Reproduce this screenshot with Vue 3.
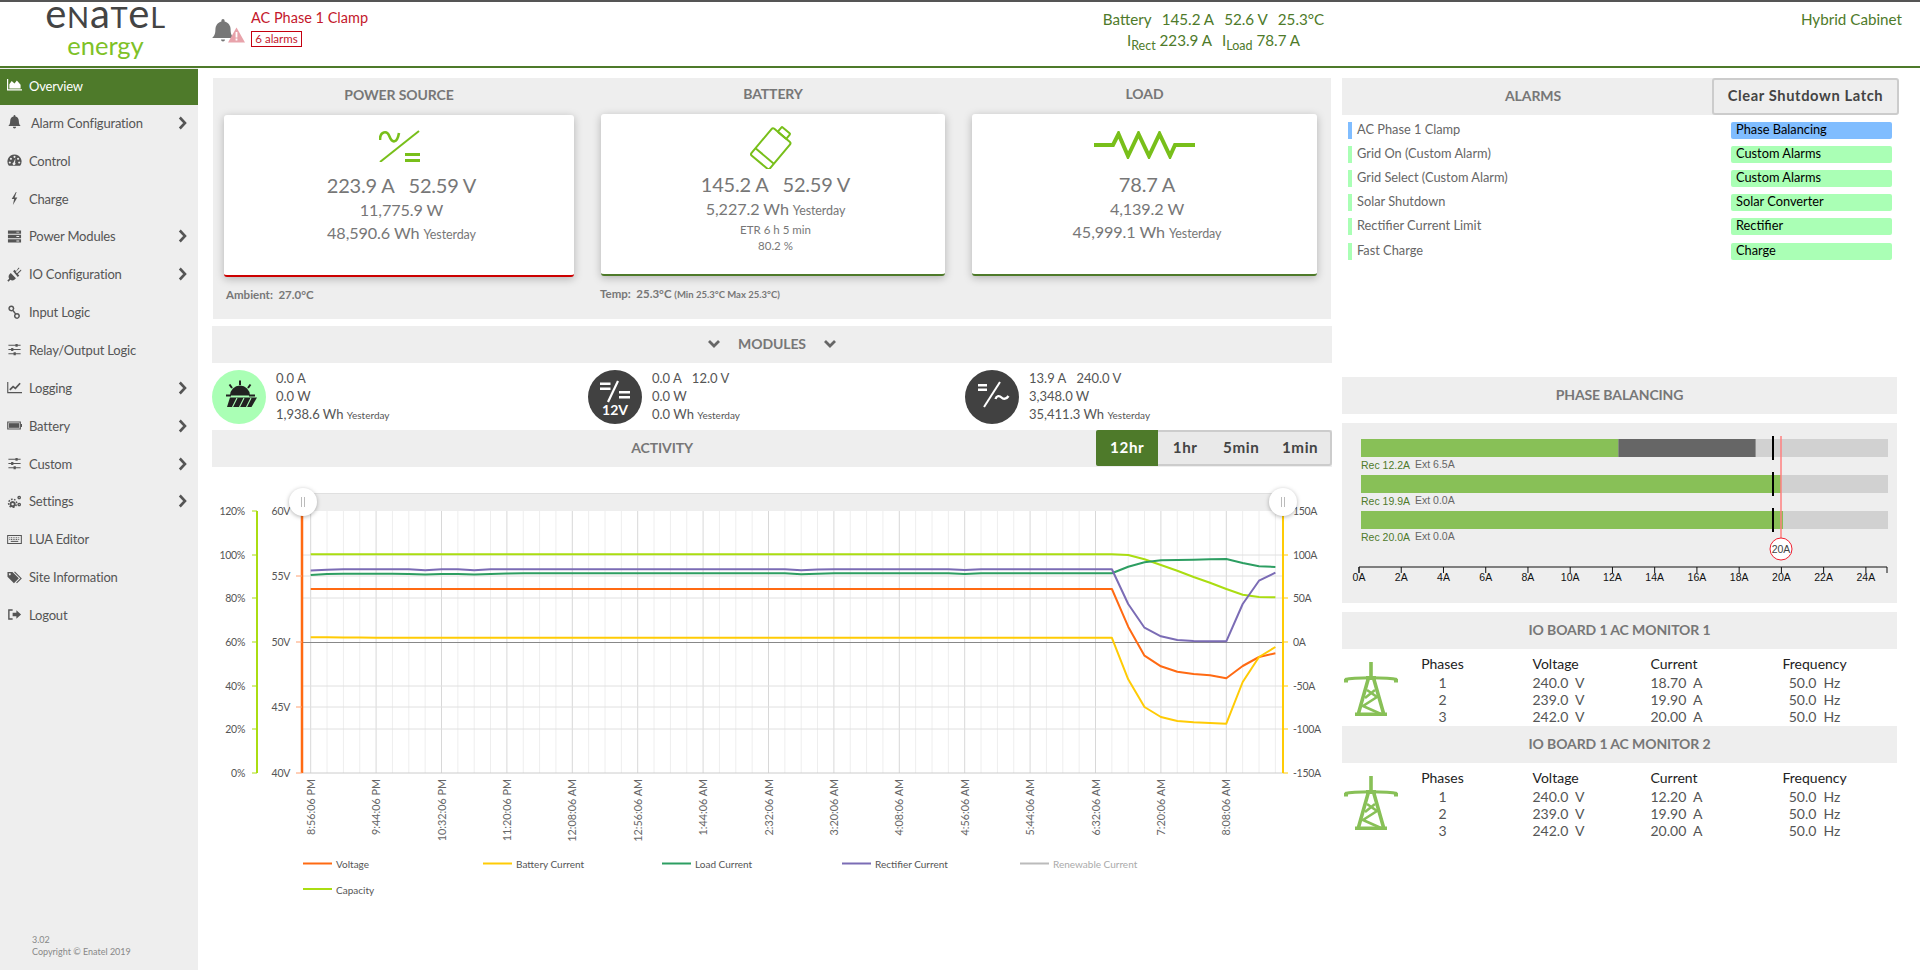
<script setup>
const menu = [
  { t: 'Overview', active: true, p: [{ f: 'M0 0h1.3v11H16v1.2H0z M2.5 10V5.5L5 2.2 8 4.7 10.5 1.5 14.5 6V10z' }] },
  { t: 'Alarm Configuration', more: true, wide: true, p: [{ f: 'M8 0a1 1 0 0 1 1 1v.5c2.4.5 3.6 2.5 3.6 4.8 0 3 .9 4.3 2 5.4H1.4c1.1-1.1 2-2.4 2-5.4C3.4 4 4.6 2 7 1.5V1a1 1 0 0 1 1-1z M6.3 12.6h3.4a1.7 1.7 0 0 1-3.4 0z' }] },
  { t: 'Control', p: [{ f: 'M8 1.5a7.5 7.5 0 0 0-6 12h12a7.5 7.5 0 0 0-6-12z M8 3a1.1 1.1 0 1 0 .01 0z M4.2 5a1.1 1.1 0 1 0 .01 0z M11.8 5a1.1 1.1 0 1 0 .01 0z M3 9a1.1 1.1 0 1 0 .01 0z M13 9a1.1 1.1 0 1 0 .01 0z M9 5.5 7 10a1.5 1.5 0 1 0 1.6.4z', e: 1 }] },
  { t: 'Charge', p: [{ f: 'M9.5 1 5 8.6h2.6L6.3 15 11 6.8H8.2L10.2 1z' }] },
  { t: 'Power Modules', more: true, p: [{ f: 'M1 1.5h14v3.6H1z M1 6.2h14v3.6H1z M1 10.9h14v3.6H1z M10 2.8h3v1h-3z M10 7.5h3v1h-3z M10 12.2h3v1h-3z', e: 1 }] },
  { t: 'IO Configuration', more: true, p: [{ f: 'M4 6.5l5.5 5.5-1.3 1.3c-1.4 1.2-3.2 1.3-4.6.4L1.6 15.7.3 14.4l2-2c-.9-1.4-.8-3.2.4-4.6z M6.5 4.6l1.6-1.6 1.6 1.6L12.2.9c.5-.5 1.3.3.8.8L9.3 5.3l1.4 1.4 3.6-3.6c.5-.5 1.3.3.8.8l-3.6 3.6 1.6 1.6-1.6 1.6z' }] },
  { t: 'Input Logic', p: [{ s: 'M6.5 2.2a2.4 2.4 0 1 0-3 3.6 2.4 2.4 0 0 0 3-3.6z M12.5 10.2a2.4 2.4 0 1 0-3 3.6 2.4 2.4 0 0 0 3-3.6z M6.5 6 9.5 10', w: 1.6 }] },
  { t: 'Relay/Output Logic', p: [{ s: 'M1.5 3.5h13 M1.5 8h13 M1.5 12.5h13', w: 1.2 }, { f: 'M9 2h2.4v3H9z M4.4 6.5h2.4v3H4.4z M7 11h2.4v3H7z' }] },
  { t: 'Logging', more: true, p: [{ s: 'M.8 2v11.5H16', w: 1.2 }, { s: 'M3 10.5 6.5 7l2.5 2 5-5.5', w: 1.8 }] },
  { t: 'Battery', more: true, p: [{ s: 'M.8 4.3h13.4v7.4H.8z M15.5 6.5v3', w: 1.2 }, { f: 'M2 5.5h11v5H2z' }] },
  { t: 'Custom', more: true, p: [{ s: 'M1.5 3.5h13 M1.5 8h13 M1.5 12.5h13', w: 1.2 }, { f: 'M9 2h2.4v3H9z M4.4 6.5h2.4v3H4.4z M7 11h2.4v3H7z' }] },
  { t: 'Settings', more: true, p: [{ s: 'M6 8.5a2.3 2.3 0 1 0 .01 0z', w: 2 }, { s: 'M6 5.5a4.3 4.3 0 1 0 .01 0z', w: 1.6, d: '1.8 1.5' }, { s: 'M13 2.5a1.2 1.2 0 1 0 .01 0z M13 10a1.2 1.2 0 1 0 .01 0z', w: 1.5 }] },
  { t: 'LUA Editor', p: [{ s: 'M.7 3.7h14.6v8.6H.7z', w: 1.1 }, { s: 'M2.5 6.2h11 M2.5 8h11', w: 1.1, d: '1 .8' }, { s: 'M4 10h8', w: 1.1 }] },
  { t: 'Site Information', p: [{ f: 'M.5 2h5.3l6.8 6.8-5.2 5.2L.5 7.3z M3 3.5a1 1 0 1 0 .01 0z', e: 1 }, { s: 'M8 2l7 7-4.8 4.8', w: 1.2 }] },
  { t: 'Logout', p: [{ s: 'M6 3.2H2v9.6h4', w: 1.5 }, { f: 'M6 6.2h4V3.5L15 8l-5 4.5V9.8H6z' }] }
]
const alarms = [
  ['AC Phase 1 Clamp', 'Phase Balancing', 'blue'],
  ['Grid On (Custom Alarm)', 'Custom Alarms', ''],
  ['Grid Select (Custom Alarm)', 'Custom Alarms', ''],
  ['Solar Shutdown', 'Solar Converter', ''],
  ['Rectifier Current Limit', 'Rectifier', ''],
  ['Fast Charge', 'Charge', '']
]
const monitors = [
  { title: 'IO BOARD 1 AC MONITOR 1', rows: [[1, '240.0', '18.70'], [2, '239.0', '19.90'], [3, '242.0', '20.00']] },
  { title: 'IO BOARD 1 AC MONITOR 2', rows: [[1, '240.0', '12.20'], [2, '239.0', '19.90'], [3, '242.0', '20.00']] }
]

// chart geometry in page pixels
const X0 = 310.7, DX = 16.35
const hLight = [555, 576, 598, 686, 707, 729]
const vLines = Array.from({ length: 60 }, (_, i) => ({ x: X0 + i * DX, major: i % 4 === 0 }))
const times = ['8:56:06 PM', '9:44:06 PM', '10:32:06 PM', '11:20:06 PM', '12:08:06 AM', '12:56:06 AM', '1:44:06 AM', '2:32:06 AM', '3:20:06 AM', '4:08:06 AM', '4:56:06 AM', '5:44:06 AM', '6:32:06 AM', '7:20:06 AM', '8:08:06 AM']
const pct = ['120%', '100%', '80%', '60%', '40%', '20%', '0%'].map((t, i) => ({ t, y: [511, 555, 598, 642, 686, 729, 773][i] }))
const amp = ['150A', '100A', '50A', '0A', '-50A', '-100A', '-150A'].map((t, i) => ({ t, y: [511, 555, 598, 642, 686, 729, 773][i] }))
const volt = [['60V', 511], ['55V', 576], ['50V', 642], ['45V', 707], ['40V', 773]].map(([t, y]) => ({ t, y }))

function series(base, wiggle, tail) {
  const pts = []
  for (let i = 0; i < 50; i++) {
    const o = wiggle[i] ?? 0
    pts.push(`${(X0 + i * DX).toFixed(1)},${(base + o).toFixed(1)}`)
  }
  tail.forEach((y, i) => pts.push(`${(X0 + (50 + i) * DX).toFixed(1)},${(480 + y / 3).toFixed(1)}`))
  return pts.join(' ')
}
const lines = [
  { c: '#aadd11', p: series(554.2, {}, [225, 238, 255, 272, 291, 308, 327, 344, 351, 352]) },
  { c: '#2d9e62', p: series(573.2, { 0: 1.8, 1: .8, 2: .5, 3: .5, 4: .5, 5: .5, 6: .7, 7: 1.2, 8: .7, 9: .7, 10: 1.2, 11: .8, 12: .4, 24: .1, 30: 1.1, 31: .6, 40: .9 }, [260, 247, 241, 240, 239, 238, 237, 249, 259, 261]) },
  { c: '#7b6cb5', p: series(569.3, { 0: 1.2, 1: .5, 7: 1, 10: 1, 30: .9, 31: .2, 40: .8 }, [372, 443, 469, 480, 483, 484, 484, 372, 302, 278]) },
  { c: '#ff6a13', p: series(589, {}, [440, 527, 559, 575, 582, 586, 595, 558, 531, 520]) },
  { c: '#ffcb05', p: series(637.8, { 0: -.6, 1: -.5, 2: -.4, 3: -.4 }, [598, 681, 711, 723, 727, 729, 731, 606, 531, 501]) }
]
const legend = [
  { t: 'Voltage', c: '#ff6a13', x: 303, y: 863.5 },
  { t: 'Battery Current', c: '#ffcb05', x: 483, y: 863.5 },
  { t: 'Load Current', c: '#2d9e62', x: 662, y: 863.5 },
  { t: 'Rectifier Current', c: '#7b6cb5', x: 842, y: 863.5 },
  { t: 'Renewable Current', c: '#bbbbbb', x: 1020, y: 863.5, dim: true },
  { t: 'Capacity', c: '#aadd11', x: 303, y: 889 }
]

// phase balancing geometry in page pixels
const PX = 21.1
const phases = [
  { y: 439, rec: 12.2, ext: 6.5, ly: 469 },
  { y: 475, rec: 19.9, ext: 0, ly: 505 },
  { y: 511, rec: 20, ext: 0, ly: 541 }
]
const scale = Array.from({ length: 13 }, (_, i) => ({ x: 1359 + i * 42.24, t: `${i * 2}A` }))
</script>

<template>
  <div class="page">
    <header class="top">
      <div class="logo">
        <div class="logo-a"><span class="lc">e</span>N<span class="lc">a</span>T<span class="lc">e</span>L</div>
        <div class="logo-b">energy</div>
      </div>
      <div class="bell">
        <svg width="36" height="26" viewBox="0 0 36 26">
          <path fill="#777" d="M12 0a1.6 1.6 0 0 1 1.6 1.6v1c4 1 6 4.4 6 8 0 4.6 1.3 6.7 3.2 8.4H1.2C3.1 17.3 4.4 15.2 4.4 10.6c0-3.6 2-7 6-8v-1A1.6 1.6 0 0 1 12 0z M10 20.5h4a2 2 0 0 1-4 0z" />
          <path fill="#e8a3ab" d="M25.5 8.5 34 23.5H17z" />
          <path fill="#fff" d="M24.6 13h1.8v5.5h-1.8z M24.6 19.5h1.8v2h-1.8z" />
        </svg>
      </div>
      <div class="alert">
        <div class="alert-t">AC Phase 1 Clamp</div>
        <div class="alert-b">6 alarms</div>
      </div>
      <div class="status">
        <div>Battery<span class="sp"></span>145.2 A<span class="sp"></span>52.6 V<span class="sp"></span>25.3°C</div>
        <div>I<sub>Rect</sub> 223.9 A<span class="sp"></span>I<sub>Load</sub> 78.7 A</div>
      </div>
      <div class="cabinet">Hybrid Cabinet</div>
    </header>

    <div class="body">
      <nav class="side">
        <div v-for="m in menu" :key="m.t" class="item" :class="{ active: m.active }">
          <svg class="ic" :class="{ wide: m.wide }" viewBox="0 0 16 16" width="15" height="15">
            <g v-for="(p, i) in m.p" :key="i">
              <path v-if="p.f" :d="p.f" fill="currentColor" :fill-rule="p.e ? 'evenodd' : 'nonzero'" />
              <path v-if="p.s" :d="p.s" fill="none" stroke="currentColor" :stroke-width="p.w" :stroke-dasharray="p.d" />
            </g>
          </svg>
          <span class="lbl">{{ m.t }}</span>
          <svg v-if="m.more" class="chev" width="9" height="14" viewBox="0 0 9 14"><path d="M1.8 1.5 7 7l-5.2 5.5" fill="none" stroke="#555" stroke-width="2.6" /></svg>
        </div>
        <div class="foot">
          <div>3.02</div>
          <div>Copyright © Enatel 2019</div>
        </div>
      </nav>

      <main class="main">
        <section class="left">
          <div class="source">
            <div class="scol">
              <div class="sh first">POWER SOURCE</div>
              <div class="card red">
                <svg class="cic" width="41" height="32" viewBox="0 0 41 32">
                  <path d="M1 9C1 0 8-1 10.5 5.5S18 13 20 2" transform="translate(0 1)" fill="none" stroke="#78bf1a" stroke-width="2.6" />
                  <path d="M40 1 1 32" stroke="#78bf1a" stroke-width="2" />
                  <path d="M26 23h15v3H26z M26 29h15v3H26z" fill="#78bf1a" />
                </svg>
                <div class="v1 m1">223.9 A<span class="sp2"></span>52.59 V</div>
                <div class="v2">11,775.9 W</div>
                <div class="v2">48,590.6 Wh <small>Yesterday</small></div>
              </div>
              <div class="note">Ambient:&nbsp; 27.0°C</div>
            </div>
            <div class="scol">
              <div class="sh">BATTERY</div>
              <div class="card grn">
                <svg class="cic bat" width="46" height="46" viewBox="0 0 46 46">
                  <g transform="rotate(40 23 23)" fill="none" stroke="#78bf1a" stroke-width="2" stroke-linejoin="round">
                    <rect x="11" y="9" width="24" height="35" rx="2" />
                    <rect x="17.5" y="2.5" width="11" height="6.5" rx="1" />
                    <path d="M11 36h24" />
                  </g>
                </svg>
                <div class="v1 m2">145.2 A<span class="sp2"></span>52.59 V</div>
                <div class="v2">5,227.2 Wh <small>Yesterday</small></div>
                <div class="v3">ETR 6 h 5 min</div>
                <div class="v3">80.2 %</div>
              </div>
              <div class="note n2">Temp:&nbsp; 25.3°C <small>(Min 25.3°C Max 25.3°C)</small></div>
            </div>
            <div class="scol">
              <div class="sh">LOAD</div>
              <div class="card grn">
                <svg class="cic res" width="101" height="28" viewBox="0 0 101 28">
                  <path d="M0 14H19L24.5 3 34 25 44.5 3 55 25 65.5 3 76 25 81 14H101" fill="none" stroke="#78bf1a" stroke-width="4" stroke-linejoin="miter" />
                </svg>
                <div class="v1 m3">78.7 A</div>
                <div class="v2">4,139.2 W</div>
                <div class="v2">45,999.1 Wh <small>Yesterday</small></div>
              </div>
            </div>
          </div>

          <div class="bar modules">
            <svg width="14" height="10" viewBox="0 0 14 10"><path d="M2 2l5 5 5-5" fill="none" stroke="#666" stroke-width="2.8" /></svg>
            <span>MODULES</span>
            <svg width="14" height="10" viewBox="0 0 14 10"><path d="M2 2l5 5 5-5" fill="none" stroke="#666" stroke-width="2.8" /></svg>
          </div>

          <div class="mods">
            <div class="mod">
              <svg width="54" height="54" viewBox="0 0 54 54">
                <circle cx="27" cy="27" r="27" fill="#aaffb5" />
                <path d="M18 25.5a10 10 0 0 1 20 0z" fill="#222" />
                <path d="M28 10.5v4.5 M17.5 14.5l2.5 3.5 M38.5 14.5 36 18 M14 25.5h5 M37 25.5h6" stroke="#222" stroke-width="2" fill="none" />
                <path d="M18 27.5h27l-5.5 9.5H15z" fill="#222" />
                <path d="M25 28l-4.5 9 M32 28l-4.5 9 M39 28l-4.5 9" stroke="#aaffb5" stroke-width="1.1" />
              </svg>
              <div class="mt"><div>0.0 A</div><div>0.0 W</div><div>1,938.6 Wh <small>Yesterday</small></div></div>
            </div>
            <div class="mod">
              <svg width="54" height="54" viewBox="0 0 54 54">
                <circle cx="27" cy="27" r="27" fill="#414141" />
                <path d="M12 12.5h10.500v2.6H12z M12 17.500h10.500v2.6H12z M31 21h11v2.6H31z M31 26h11v2.6H31z" fill="#fff" />
                <path d="M30 11 20 32" stroke="#fff" stroke-width="2.2" />
                <text x="27" y="45" class="v12">12V</text>
              </svg>
              <div class="mt"><div>0.0 A<span class="sp3"></span>12.0 V</div><div>0.0 W</div><div>0.0 Wh <small>Yesterday</small></div></div>
            </div>
            <div class="mod">
              <svg width="54" height="54" viewBox="0 0 54 54">
                <circle cx="27" cy="27" r="27" fill="#414141" />
                <path d="M13 14h9v2.4h-9z M13 18.5h9v2.4h-9z" fill="#fff" />
                <path d="M35 12 19 37" stroke="#fff" stroke-width="2" />
                <path d="M30.5 29c1-3.5 4-3.5 6-1.5s5 1.5 7-1.5" fill="none" stroke="#fff" stroke-width="2.4" />
              </svg>
              <div class="mt"><div>13.9 A<span class="sp3"></span>240.0 V</div><div>3,348.0 W</div><div>35,411.3 Wh <small>Yesterday</small></div></div>
            </div>
          </div>

          <div class="bar activity">
            <span class="act-t">ACTIVITY</span>
            <div class="btns">
              <span class="on">12hr</span><span>1hr</span><span>5min</span><span>1min</span>
            </div>
          </div>

          <svg class="chart" width="1120" height="440" viewBox="212 467 1120 440">
            <rect x="303" y="493" width="980" height="18" fill="#eeeeee" />
            <path d="M303 493.5H1283" stroke="#e0e0e0" />
            <line v-for="v in vLines" :key="v.x" :x1="v.x" :x2="v.x" y1="511" y2="773" :stroke="v.major ? '#d8d8d8' : '#eeeeee'" />
            <line v-for="y in hLight" :key="y" x1="302" x2="1283" :y1="y" :y2="y" stroke="#e0e0e0" />
            <path d="M302 642.5H1283" stroke="#888" />
            <path d="M302 773H1283" stroke="#ccc" />

            <path d="M257 511V773" stroke="#aadd11" stroke-width="2" />
            <path v-for="p in pct" :key="p.t" :d="`M252 ${p.y}H257`" stroke="#aadd11" />
            <text v-for="p in pct" :key="p.t" x="245" :y="p.y + 4" class="ax end">{{ p.t }}</text>

            <path d="M302 511V773" stroke="#ff6a13" stroke-width="2.5" />
            <path v-for="p in volt" :key="p.t" :d="`M296 ${p.y}H302`" stroke="#ffa070" />
            <text v-for="p in volt" :key="p.t" x="290" :y="p.y + 4" class="ax end">{{ p.t }}</text>

            <path d="M1283 511V773" stroke="#ffcb05" stroke-width="2" />
            <path v-for="p in amp" :key="p.t" :d="`M1283 ${p.y}H1288`" stroke="#ffcb05" />
            <text v-for="p in amp" :key="p.t" x="1293" :y="p.y + 4" class="ax">{{ p.t }}</text>

            <polyline v-for="l in lines" :key="l.c" :points="l.p" fill="none" :stroke="l.c" stroke-width="2" stroke-linejoin="round" />

            <text v-for="(t, i) in times" :key="t" class="tm" :transform="`translate(${X0 + i * 65.4 + 4} 779) rotate(-90)`">{{ t }}</text>

            <g v-for="l in legend" :key="l.t">
              <path :d="`M${l.x} ${l.y}h29`" :stroke="l.c" stroke-width="2" />
              <text :x="l.x + 33" :y="l.y + 4.5" class="lg" :class="{ dim: l.dim }">{{ l.t }}</text>
            </g>

            <g class="handle">
              <circle cx="303" cy="502" r="14" fill="#fff" />
              <path d="M301.5 497v10M304.5 497v10" stroke="#bbb" />
            </g>
            <g class="handle">
              <circle cx="1283" cy="502" r="14" fill="#fff" />
              <path d="M1281.5 497v10M1284.5 497v10" stroke="#bbb" />
            </g>
          </svg>
        </section>

        <section class="right">
          <div class="bar alarm-h">
            <span class="alarm-t">ALARMS</span>
            <span class="latch">Clear Shutdown Latch</span>
          </div>
          <div class="alarms">
            <div v-for="a in alarms" :key="a[0]" class="alarm" :class="a[2]">
              <i></i><span>{{ a[0] }}</span><b>{{ a[1] }}</b>
            </div>
          </div>

          <div class="bar rh">PHASE BALANCING</div>
          <svg class="phase" width="555" height="180" viewBox="1342 423 555 180">
            <rect x="1342" y="423" width="555" height="180" fill="#eeeeee" />
            <g v-for="p in phases" :key="p.y">
              <rect x="1361" :y="p.y" width="527" height="18" fill="#d1d1d1" />
              <rect x="1361" :y="p.y" :width="p.rec * PX" height="18" fill="#88c057" />
              <rect :x="1361 + p.rec * PX" :y="p.y" :width="p.ext * PX" height="18" fill="#666" />
              <rect x="1772" :y="p.y - 3" width="2" height="24" fill="#000" />
              <text x="1361" :y="p.ly" class="pl rec">Rec {{ p.rec.toFixed(1) }}A</text>
              <text x="1415" :y="p.ly - 1" class="pl">Ext {{ p.ext.toFixed(1) }}A</text>
            </g>
            <path d="M1781 436V538" stroke="#ff7f7f" stroke-width="1.5" />
            <circle cx="1781" cy="549" r="11" fill="#fff" stroke="#f02030" />
            <text x="1781" y="552.5" class="pl mid">20A</text>
            <path d="M1359 573v-6H1887v6" fill="none" stroke="#111" />
            <g v-for="s in scale" :key="s.t">
              <path :d="`M${s.x} 567v6`" stroke="#111" />
              <text :x="s.x" y="581" class="pl mid blk">{{ s.t }}</text>
            </g>
          </svg>

          <div v-for="m in monitors" :key="m.title" class="mon">
            <div class="bar rh">{{ m.title }}</div>
            <div class="mon-b">
              <svg class="tower" width="54" height="54" viewBox="0 0 54 54">
                <path fill="none" stroke="#88c057" stroke-width="3.6" d="M27 0V16 M24.5 16 14 53 M29.5 16 40 53 M11 52.2H43" />
                <path fill="none" stroke="#88c057" stroke-width="3" d="M1 17.5C10 15 44 15 53 17.5" />
                <path fill="#88c057" d="M0 17h4v3.5H0z M50 17h4v3.5h-4z M22 14h10v4H22z" />
                <path fill="none" stroke="#88c057" stroke-width="2.6" d="M23 28 33 35 19 44 37 52 M31 28 21 36" />
              </svg>
              <div class="tb">
                <div class="th ctr">Phases</div><div class="th">Voltage</div><div class="th">Current</div><div class="th ctr2">Frequency</div>
                <template v-for="r in m.rows" :key="r[0]">
                  <div class="ctr">{{ r[0] }}</div>
                  <div>{{ r[1] }}&nbsp; V</div>
                  <div>{{ r[2] }}&nbsp; A</div>
                  <div class="ctr2">50.0&nbsp; Hz</div>
                </template>
              </div>
            </div>
          </div>
        </section>
      </main>
    </div>
  </div>
</template>

<style>
html, body { margin: 0; padding: 0; background: #fff; overflow: hidden; }
</style>

<style scoped>
.page { width: 1920px; height: 970px; display: flex; flex-direction: column; font-family: Lato, "Liberation Sans", sans-serif; color: #555; overflow: hidden; background: #fff; }
.top { height: 64px; flex: none; border-top: 2px solid #555; border-bottom: 2px solid #4e7a2a; display: grid; grid-template-columns: 211px 40px 850px 225px 1fr; }
.logo { text-align: center; line-height: 1; width: 211px; }
.logo-a { font-size: 29px; color: #444; height: 30px; padding-top: 1px; box-sizing: border-box; letter-spacing: .7px; line-height: 27px; }
.logo-a .lc { font-size: 40px; line-height: 20px; }
.logo-b { color: #7ec127; font-size: 25.5px; line-height: 26px; }
.bell { padding-top: 17px; }
.alert-t { color: #c4182c; font-size: 14.5px; line-height: 18px; margin-top: 7px; }
.alert-b { color: #c4182c; border: 1px solid #c4000f; font-size: 11.5px; line-height: 14px; width: 49px; text-align: center; margin-top: 4px; box-sizing: content-box; }
.status { color: #4e7a2a; font-size: 15.2px; text-align: center; line-height: 21px; padding-top: 7px; white-space: nowrap; }
.status sub { font-size: 12.5px; line-height: 0; }
.sp { display: inline-block; width: 10px; }
.cabinet { color: #4e7a2a; font-size: 15.2px; text-align: right; padding: 7px 18px 0 0; line-height: 21px; }

.body { flex: 1; display: flex; min-height: 0; }
.side { width: 198px; flex: none; background: #eee; padding-top: 1px; position: relative; box-sizing: border-box; }
.item { height: 37.85px; display: flex; align-items: center; padding: 0 10px 2px 7px; box-sizing: border-box; font-size: 13px; letter-spacing: -.18px; color: #555; }
.item.active { height: 36px; background: #4e7a2a; color: #fff; }
.ic { flex: none; margin-right: 7px; }
.ic.wide { margin-right: 9px; }
.lbl { flex: 1; white-space: nowrap; }
.chev { flex: none; margin-right: 1px; }
.foot { position: absolute; left: 32px; top: 866px; font-size: 9px; line-height: 12px; color: #888; }

.main { display: grid; grid-template-columns: 1120px 557px; column-gap: 10px; padding: 10px 0 0 14px; align-items: start; }
.bar { background: #eee; display: flex; align-items: center; justify-content: center; color: #777; font-size: 14px; letter-spacing: -.1px; font-weight: 700; padding-bottom: 2px; box-sizing: border-box; }

.source { margin-left: 1px; width: 1118px; height: 241px; background: #eee; box-sizing: border-box; padding-left: 11px; display: grid; grid-template-columns: 350px 344px 345px; column-gap: 27px; }
.scol { display: flex; flex-direction: column; }
.sh { height: 36px; line-height: 31px; text-align: center; color: #777; font-size: 14px; font-weight: 700; letter-spacing: -.1px; }
.sh.first { height: 37px; line-height: 34px; }
.card { height: 162px; background: #fff; border-radius: 3px; box-sizing: border-box; border-bottom: 2.5px solid #4e7a2a; box-shadow: 0 2px 8px rgba(0,0,0,.25); text-align: center; color: #777; display: flex; flex-direction: column; align-items: center; }
.card.red { border-bottom-color: #c00; }
.cic { margin-top: 15px; flex: none; height: 32px; }
.cic.bat { margin-top: 9px; height: 46px; }
.cic.res { margin-top: 17px; height: 28px; }
.v1 { font-size: 20px; letter-spacing: -.2px; line-height: 26px; margin-top: 10px; white-space: nowrap; padding-left: 5px; }
.m2 { margin-top: 2px; }
.m3 { margin-top: 12px; }
.v2 { font-size: 16.2px; letter-spacing: -.1px; line-height: 23px; white-space: nowrap; padding-left: 5px; }
.v2 small { font-size: 12.5px; }
.v3 { font-size: 11.5px; line-height: 15.5px; padding-left: 5px; }
.sp2 { display: inline-block; width: 14px; }
.note { font-size: 11.5px; font-weight: 700; color: #777; padding: 11px 2px 0; white-space: nowrap; }
.note.n2 { margin-left: -3px; }
.note small { font-size: 9.5px; }

.modules { margin-top: 7px; height: 37px; gap: 17px; width: 1120px; }
.mods { height: 67px; display: grid; grid-template-columns: 376px 377px 1fr; align-items: center; }
.mod { display: flex; gap: 10px; align-items: center; }
.mt { font-size: 13px; line-height: 18px; color: #555; white-space: nowrap; }
.mt small { font-size: 10px; }
.sp3 { display: inline-block; width: 10px; }
.v12 { font: 700 14px Lato, sans-serif; fill: #fff; text-anchor: middle; }

.activity { height: 37px; justify-content: flex-start; padding-bottom: 0; }
.act-t { width: 901px; margin-right: -17px; text-align: center; margin-top: -2px; }
.btns { width: 236px; height: 36px; margin-left: 1px; box-sizing: border-box; border: 2px solid #ccc; border-radius: 3px; display: grid; grid-template-columns: 60px 54px 58px 1fr; align-items: stretch; font-size: 15.2px; font-weight: 700; letter-spacing: .6px; color: #444; background: #e9e9e9; text-align: center; line-height: 30px; align-self: flex-start; }
.btns .on { background: #4e7a2a; color: #fff; border-radius: 2px 0 0 2px; margin: -2px 0 -2px -2px; line-height: 34px; width: 62px; }
.chart { display: block; }
.ax { font: 10.5px Lato, sans-serif; letter-spacing: -.3px; fill: #555; }
.ax.end { text-anchor: end; }
.tm { font: 10.8px Lato, sans-serif; fill: #666; text-anchor: end; }
.lg { font: 10px Lato, sans-serif; fill: #555; }
.lg.dim { fill: #aaa; }
.handle { filter: drop-shadow(0 1px 2px rgba(0,0,0,.3)); }

.alarm-h { width: 557px; height: 37px; justify-content: flex-start; background: linear-gradient(#eee, #eee) no-repeat 0 0 / 555px 100%; padding-bottom: 0; }
.alarm-t { width: 382px; margin-right: -12px; text-align: center; margin-top: -2px; }
.latch { width: 187px; height: 37px; margin-top: -1px; box-sizing: border-box; border: 2px solid #ccc; border-radius: 3px; font-size: 14.7px; font-weight: 700; letter-spacing: .6px; color: #444; text-align: center; line-height: 31px; white-space: nowrap; }
.alarms { height: 262px; box-sizing: border-box; padding: 7px 0 0 5.5px; }
.alarm { display: grid; grid-template-columns: 4.5px 379px 161px; height: 17px; margin-bottom: 7px; font-size: 12.8px; line-height: 15px; color: #666; }
.alarm:nth-child(5) { margin-bottom: 8px; }
.alarm i { background: #aaffb5; }
.alarm span { padding-left: 5px; }
.alarm b { background: #aaffb5; color: #000; font-weight: 400; border-radius: 2px; padding-left: 5px; }
.alarm.blue i, .alarm.blue b { background: #80bdff; }
.rh { width: 555px; height: 37px; }
.phase { display: block; margin: 9px 0; }
.pl { font: 10.5px "Liberation Sans", sans-serif; fill: #666; }
.pl.rec { fill: #4e7a2a; }
.pl.mid { text-anchor: middle; fill: #444; font-size: 10.5px; }
.pl.blk { fill: #111; }
.mon-b { display: flex; height: 77px; box-sizing: border-box; padding: 4px 0 0 2px; }
.tower { flex: none; margin: 9px 0 0; }
.tb { margin-left: 21.5px; display: grid; grid-template-columns: 113px 118px 132px 1fr; grid-template-rows: 21px 17px 17px 17px; font-size: 14px; line-height: 17px; color: #555; white-space: nowrap; }
.th { color: #222; line-height: 22px; }
.ctr { width: 46px; text-align: center; }
.ctr2 { width: 64px; text-align: center; }
</style>
